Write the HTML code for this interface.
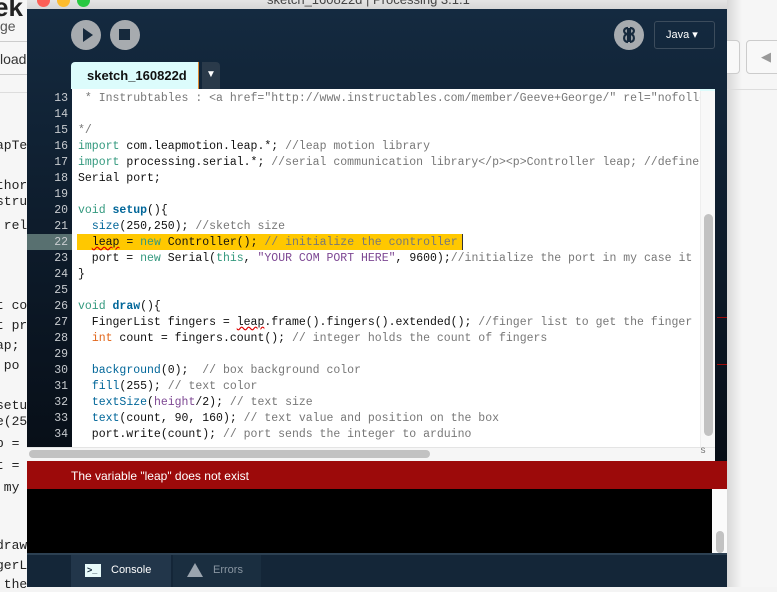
<!DOCTYPE html>
<html><head><meta charset="utf-8"><style>
*{margin:0;padding:0;box-sizing:border-box}
body{width:777px;height:587px;overflow:hidden;background:#f4f4f4;position:relative;font-family:"Liberation Sans",sans-serif}
.abs{position:absolute}
.bgtxt{position:absolute;font-family:"Liberation Mono",monospace;font-size:13px;color:#222;left:-4px}
.code{position:absolute;left:72px;top:89px;width:628px;height:358px;background:#fff;overflow:hidden}
.ln{position:absolute;left:27px;width:41px;text-align:right;font-family:"Liberation Mono",monospace;font-size:11.5px;color:#c8ccd0}
.cl{position:absolute;left:6px;white-space:pre;font-family:"Liberation Mono",monospace;font-size:11.5px;color:#111}
.k{color:#33997e}.f{color:#006699}.c{color:#777}.s{color:#7d4793}.o{color:#e2661a}
</style></head><body>
<div class="abs" style="left:0;top:0;width:27px;height:587px;background:#f6f6f6"></div>
<div class="abs" style="left:-6px;top:-8px;font-size:26px;font-weight:bold;color:#222">ek</div>
<div class="abs" style="left:0;top:18px;font-size:14px;color:#555">ge</div>
<div class="abs" style="left:0;top:41px;width:27px;height:1px;background:#ccc"></div>
<div class="abs" style="left:0;top:51px;font-size:14px;color:#333">load</div>
<div class="abs" style="left:0;top:74px;width:27px;height:1px;background:#ccc"></div>
<div class="abs" style="left:0;top:92px;width:27px;height:1px;background:#ddd"></div>
<div class="bgtxt" style="top:138px">apTe</div>
<div class="bgtxt" style="top:178px">thor</div>
<div class="bgtxt" style="top:194px">stru</div>
<div class="bgtxt" style="top:218px">&nbsp;rel</div>
<div class="bgtxt" style="top:298px">t co</div>
<div class="bgtxt" style="top:318px">t pr</div>
<div class="bgtxt" style="top:338px">ap;</div>
<div class="bgtxt" style="top:358px">&nbsp;po</div>
<div class="bgtxt" style="top:398px">setu</div>
<div class="bgtxt" style="top:414px">e(25</div>
<div class="bgtxt" style="top:436px">p =</div>
<div class="bgtxt" style="top:458px">t =</div>
<div class="bgtxt" style="top:480px">&nbsp;my</div>
<div class="bgtxt" style="top:538px">draw</div>
<div class="bgtxt" style="top:558px">gerL</div>
<div class="bgtxt" style="top:577px">&nbsp;the</div>
<div class="abs" style="left:727px;top:0;width:50px;height:587px;background:linear-gradient(90deg,#d8d8d8,#f6f6f6 30%)"></div>
<div class="abs" style="left:727px;top:40px;width:13px;height:34px;border:1px solid #ccc;border-left:none;border-radius:0 4px 4px 0;background:#f8f8f8"></div>
<div class="abs" style="left:746px;top:40px;width:40px;height:34px;border:1px solid #ccc;border-radius:4px;background:#f8f8f8;color:#999;font-size:13px;padding:8px 0 0 14px">◀</div>
<div class="abs" style="left:727px;top:89px;width:50px;height:1px;background:#ddd"></div>
<div class="abs" style="left:27px;top:0;width:700px;height:9px;background:linear-gradient(#e4e4e4,#d6d6d6);overflow:hidden">
 <div class="abs" style="left:10px;top:-6px;width:13px;height:13px;border-radius:50%;background:#fc5f57"></div>
 <div class="abs" style="left:30px;top:-6px;width:13px;height:13px;border-radius:50%;background:#fdbc2e"></div>
 <div class="abs" style="left:50px;top:-6px;width:13px;height:13px;border-radius:50%;background:#28c840"></div>
 <div class="abs" style="left:240px;top:-8px;font-size:13px;color:#444">sketch_160822d | Processing 3.1.1</div>
</div>
<div class="abs" style="left:27px;top:9px;width:700px;height:578px;background:linear-gradient(#142a40,#0a1420 60%,#04070b)"></div>
<div class="abs" style="left:71px;top:20px;width:30px;height:30px;border-radius:50%;background:#a7abaf"></div>
<div class="abs" style="left:83px;top:28px;width:0;height:0;border-left:10px solid #16293c;border-top:7px solid transparent;border-bottom:7px solid transparent"></div>
<div class="abs" style="left:110px;top:20px;width:30px;height:30px;border-radius:50%;background:#a7abaf"></div>
<div class="abs" style="left:119px;top:29px;width:11px;height:11px;background:#16293c"></div>
<div class="abs" style="left:614px;top:20px;width:30px;height:30px;border-radius:50%;background:#a7abaf"></div>
<svg class="abs" style="left:614px;top:20px" width="30" height="30" viewBox="0 0 30 30" fill="none" stroke="#16293c" stroke-width="2.2"><path d="M14 8 C9 8 9 13 13 14 C9 15 9 22 14 22 M14 8 V22"/><path d="M16 8 C21 8 21 13 17 14 C21 15 21 22 16 22 M16 8 V22"/></svg>
<div class="abs" style="left:654px;top:21px;width:61px;height:28px;border:1px solid #3c4c5c;border-radius:3px;color:#fff;font-size:11px;line-height:26px;padding-left:11px">Java ▾</div>
<div class="abs" style="left:71px;top:62px;width:128px;height:27px;background:#dcfcfc;border-radius:4px 0 0 0;border-right:1px solid #e08a30;font-size:13px;font-weight:bold;color:#111;line-height:27px;padding-left:16px">sketch_160822d</div>
<div class="abs" style="left:202px;top:62px;width:18px;height:27px;background:#2a3a4a;border-radius:0 4px 0 0;color:#fff;font-size:10px;text-align:center;line-height:26px">▼</div>
<div class="abs" style="left:72px;top:89px;width:643px;height:2px;background:#dcfcfc"></div>
<div class="abs" style="left:27px;top:234px;width:45px;height:16px;background:#587070"></div>
<div class="ln" style="top:92px">13</div><div class="ln" style="top:108px">14</div><div class="ln" style="top:124px">15</div><div class="ln" style="top:140px">16</div><div class="ln" style="top:156px">17</div><div class="ln" style="top:172px">18</div><div class="ln" style="top:188px">19</div><div class="ln" style="top:204px">20</div><div class="ln" style="top:220px">21</div><div class="ln" style="top:236px">22</div><div class="ln" style="top:252px">23</div><div class="ln" style="top:268px">24</div><div class="ln" style="top:284px">25</div><div class="ln" style="top:300px">26</div><div class="ln" style="top:316px">27</div><div class="ln" style="top:332px">28</div><div class="ln" style="top:348px">29</div><div class="ln" style="top:364px">30</div><div class="ln" style="top:380px">31</div><div class="ln" style="top:396px">32</div><div class="ln" style="top:412px">33</div><div class="ln" style="top:428px">34</div>
<div class="code">
<div class="abs" style="left:5px;top:145px;width:386px;height:16px;background:#ffc800"></div>
<div class="abs" style="left:390px;top:145px;width:1px;height:16px;background:#333"></div>
<div class="cl" style="top:3px"><span class="c"> * Instrubtables : &lt;a href="http://www.instructables.com/member/Geeve+George/" rel="nofollow"</span></div>
<div class="cl" style="top:35px"><span class="c">*/</span></div>
<div class="cl" style="top:51px"><span class="k">import</span> com.leapmotion.leap.*; <span class="c">//leap motion library</span></div>
<div class="cl" style="top:67px"><span class="k">import</span> processing.serial.*; <span class="c">//serial communication library&lt;/p&gt;&lt;p&gt;Controller leap; //define</span></div>
<div class="cl" style="top:83px">Serial port;</div>
<div class="cl" style="top:115px"><span class="k">void</span> <span class="f"><b>setup</b></span>(){</div>
<div class="cl" style="top:131px">  <span class="f">size</span>(250,250); <span class="c">//sketch size</span></div>
<div class="cl" style="top:147px">  <span style="text-decoration:underline wavy #d00">leap</span> = <span class="k">new</span> Controller(); <span class="c">// initialize the controller</span></div>
<div class="cl" style="top:163px">  port = <span class="k">new</span> Serial(<span class="k">this</span>, <span class="s">"YOUR COM PORT HERE"</span>, 9600);<span class="c">//initialize the port in my case it</span></div>
<div class="cl" style="top:179px">}</div>
<div class="cl" style="top:211px"><span class="k">void</span> <span class="f"><b>draw</b></span>(){</div>
<div class="cl" style="top:227px">  FingerList fingers = <span style="text-decoration:underline wavy #d00">leap</span>.frame().fingers().extended(); <span class="c">//finger list to get the finger</span></div>
<div class="cl" style="top:243px">  <span class="o">int</span> count = fingers.count(); <span class="c">// integer holds the count of fingers</span></div>
<div class="cl" style="top:275px">  <span class="f">background</span>(0);  <span class="c">// box background color</span></div>
<div class="cl" style="top:291px">  <span class="f">fill</span>(255); <span class="c">// text color</span></div>
<div class="cl" style="top:307px">  <span class="f">textSize</span>(<span class="s">height</span>/2); <span class="c">// text size</span></div>
<div class="cl" style="top:323px">  <span class="f">text</span>(count, 90, 160); <span class="c">// text value and position on the box</span></div>
<div class="cl" style="top:339px">  port.write(count); <span class="c">// port sends the integer to arduino</span></div>
</div>
<div class="abs" style="left:700px;top:91px;width:15px;height:356px;background:#f8f8f8;border-left:1px solid #eee"></div>
<div class="abs" style="left:704px;top:214px;width:9px;height:222px;border-radius:5px;background:#c2c2c2"></div>
<div class="abs" style="left:717px;top:317px;width:10px;height:1px;background:#9c0a0a"></div>
<div class="abs" style="left:717px;top:364px;width:10px;height:1px;background:#9c0a0a"></div>
<div class="abs" style="left:27px;top:447px;width:688px;height:14px;background:#f6f6f6;border-top:1px solid #e4e4e4"></div>
<div class="abs" style="left:29px;top:450px;width:401px;height:8px;border-radius:4px;background:#c2c2c2"></div>
<div class="abs" style="left:700px;top:446px;font-size:10px;color:#777;font-family:'Liberation Mono',monospace">s</div>
<div class="abs" style="left:27px;top:461px;width:700px;height:28px;background:#9c0a0a;color:#fff;font-size:12px;line-height:30px;padding-left:44px">The variable "leap" does not exist</div>
<div class="abs" style="left:27px;top:489px;width:685px;height:64px;background:#000"></div>
<div class="abs" style="left:712px;top:489px;width:15px;height:64px;background:#fafafa"></div>
<div class="abs" style="left:716px;top:531px;width:8px;height:22px;border-radius:4px;background:#c2c2c2"></div>
<div class="abs" style="left:27px;top:553px;width:700px;height:34px;background:#142638;border-top:2px solid #2c4052"></div>
<div class="abs" style="left:71px;top:555px;width:100px;height:32px;background:#22364a;color:#fff;font-size:11px;line-height:30px;padding-left:40px">Console</div>
<div class="abs" style="left:85px;top:564px;width:16px;height:13px;background:#e8fafa;color:#142638;font-size:9px;font-weight:bold;line-height:13px;padding-left:2px">&gt;_</div>
<div class="abs" style="left:173px;top:555px;width:88px;height:32px;background:#1a2e40;color:#8a96a2;font-size:11px;line-height:30px;padding-left:40px">Errors</div>
<div class="abs" style="left:187px;top:563px;width:0;height:0;border-left:8px solid transparent;border-right:8px solid transparent;border-bottom:14px solid #9aa4ae"></div>
</body></html>
